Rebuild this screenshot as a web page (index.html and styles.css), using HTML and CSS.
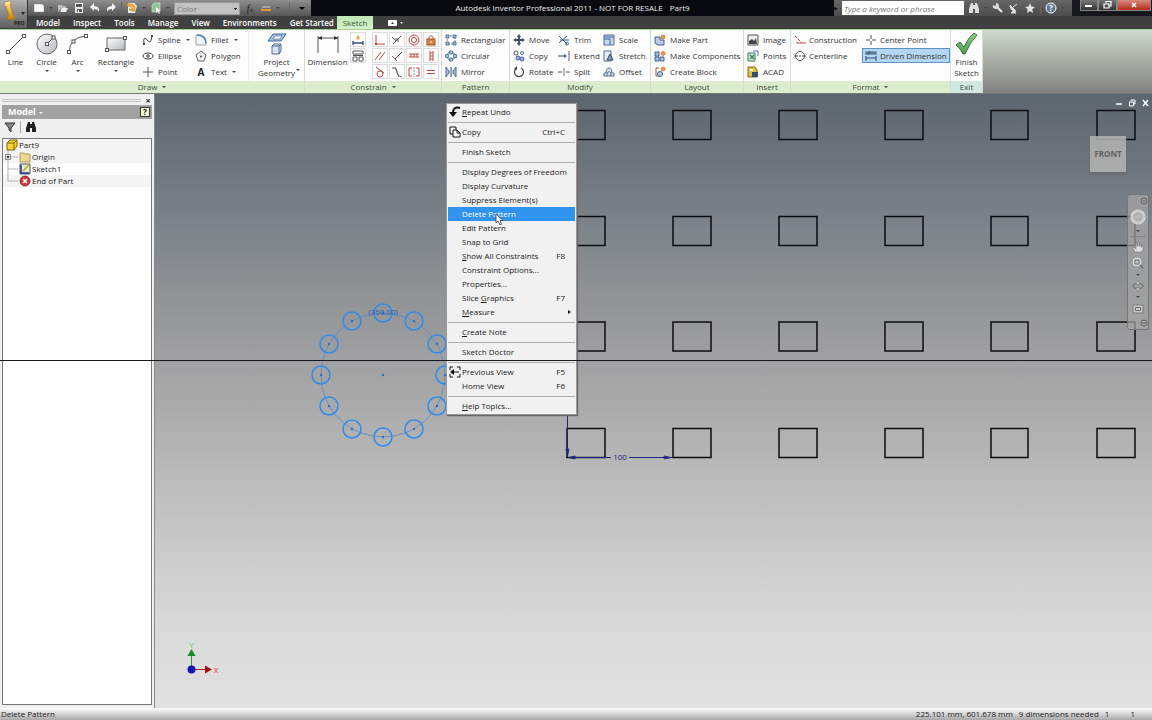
FILE: index.html
```html
<!DOCTYPE html>
<html lang="en">
<head>
<meta charset="utf-8">
<title>Autodesk Inventor Professional 2011 - Part9</title>
<link rel="stylesheet" href="styles.css">
</head>
<body>
<svg class="defs" aria-hidden="true">
  <defs>
    <linearGradient id="steel" x1="0" y1="0" x2="1" y2="1"><stop offset="0" stop-color="#fff"/><stop offset="1" stop-color="#b4b9c0"/></linearGradient>
    <linearGradient id="gold" x1="0" y1="0" x2="0" y2="1"><stop offset="0" stop-color="#fff3b0"/><stop offset=".5" stop-color="#f0b429"/><stop offset="1" stop-color="#c47b08"/></linearGradient>
    <linearGradient id="leaf" x1="0" y1="0" x2="0" y2="1"><stop offset="0" stop-color="#8ed086"/><stop offset="1" stop-color="#4c9b50"/></linearGradient>
    <symbol id="binoculars" viewBox="0 0 12 12"><path d="M3 1h2v2h2V1h2l2 6v4H7V7H5v4H1V7z" fill="currentColor"/></symbol>
  </defs>
</svg>
<div class="app">
  <header class="top">
    <button class="logo" aria-label="Application menu">
      <svg width="28" height="28" viewBox="0 0 28 28"><path d="M5 2l5-1 1 2-1 1 3 11 2 1-1 3-6 1-1-3 2-1L6 6 4 6z" fill="url(#gold)" stroke="#a56b0a" stroke-width=".5"/><path d="M21 12h4l-2 3z" fill="#222"/><text x="14" y="25" class="pro">PRO</text></svg>
    </button>
    <div class="titlebar">
      <div class="qat">
        <button aria-label="New"><svg width="12" height="12" viewBox="0 0 12 12"><path d="M1 2h8l2 2v6H1z" fill="#fff" stroke="#888" stroke-width=".5"/></svg></button><i class="dn"></i>
        <button aria-label="Open"><svg width="12" height="12" viewBox="0 0 12 12"><path d="M1 10V3h4l1 1h3v2H5z" fill="#bbb"/><path d="M3 10l2-4h6l-2 4z" fill="#eee"/></svg></button>
        <button aria-label="Save"><svg width="12" height="12" viewBox="0 0 12 12"><path d="M2 1h8v10H2z" fill="#eee"/><path d="M3 2h6v3H3zM4 7h5v3H4z" fill="#555"/><path d="M5 8h1v2H5z" fill="#fff"/></svg></button>
        <button aria-label="Undo"><svg width="12" height="12" viewBox="0 0 12 12"><path d="M1 5l4-4v3q6 0 5 6-1-3-5-3v2z" fill="#f2f2f2"/></svg></button>
        <button aria-label="Redo"><svg width="12" height="12" viewBox="0 0 12 12"><path d="M11 5L7 1v3q-6 0-5 6 1-3 5-3v2z" fill="#f2f2f2"/></svg></button>
        <i class="bar"></i>
        <button aria-label="Return"><svg width="12" height="12" viewBox="0 0 12 12"><path d="M2 1h6l3 3-2 7H2z" fill="#eee"/><path d="M1 2q8-1 8 4v3H5L3 7h4Q6 4 1 4z" fill="#f3b03c" stroke="#a86d10" stroke-width=".5"/></svg></button><i class="dn"></i>
        <button aria-label="Select"><svg width="12" height="12" viewBox="0 0 12 12"><path d="M2 3l2-2h6v7l-2 2H2z" fill="#8bc58d" stroke="#d9e8d9" stroke-width=".6"/><path d="M6 5l5 4-2 .3 1 2-1 .5-1-2-2 1z" fill="#fff"/></svg></button><i class="dn"></i>
        <select class="color" aria-label="Color"><option>Color</option></select>
        <button class="fx" aria-label="Parameters"><em>f</em><small>x</small></button>
        <button aria-label="Material"><svg width="12" height="12" viewBox="0 0 12 12"><path d="M1 8h10" stroke="#e39a2b" stroke-width="2"/><path d="M2 5h8" stroke="#ddd"/></svg></button><i class="dn"></i>
        <i class="bar end"></i><i class="dn dark"></i>
      </div>
      <h1 class="title"><span>Autodesk Inventor Professional 2011 - NOT FOR RESALE</span><span>Part9</span></h1>
      <div class="search">
        <span class="chev">▶</span>
        <input type="text" aria-label="Search help" placeholder="Type a keyword or phrase">
        <button aria-label="Search"><svg width="12" height="12"><use href="#binoculars"/></svg></button><i class="dn"></i>
        <button aria-label="Subscription"><svg width="12" height="12" viewBox="0 0 12 12"><path d="M4 4l6 6" stroke="#ddd" stroke-width="2.4"/><path d="M1 3a3 3 0 1 0 3-2v2L3 4z" fill="#ddd"/></svg></button>
        <button aria-label="Communication"><svg width="12" height="12" viewBox="0 0 12 12"><path d="M2 3q0 6 6 6zM5 5l4-3M3 11h5L6 8z" fill="#ddd" stroke="#ddd"/></svg></button>
        <button aria-label="Favorites"><svg width="12" height="12" viewBox="0 0 12 12"><path d="M6 1l1.4 3.4L11 5 8.300 7.200 9 11 6 9l-3 2 .7-3.800L1 5l3.600-.6z" fill="#e4e4e4"/></svg></button>
        <i class="bar"></i>
        <button aria-label="Help"><svg width="12" height="12" viewBox="0 0 12 12"><circle cx="6" cy="6" r="5" fill="#5c7891" stroke="#fff"/><text x="6" y="9" class="q">?</text></svg></button><i class="dn"></i>
      </div>
      <div class="winbtns"><button aria-label="Minimize"><svg width="12" height="10" viewBox="0 0 12 10"><path d="M2 6h7" stroke="#fff" stroke-width="2"/></svg></button><button aria-label="Restore"><svg width="12" height="10" viewBox="0 0 12 10"><path d="M3 4h5v4H3zM5 3V1.500h5V6H8" fill="none" stroke="#fff" stroke-width="1.200"/></svg></button><button class="close" aria-label="Close"><svg width="12" height="10" viewBox="0 0 12 10"><path d="M4 3l4 4M8 3L4 7" stroke="#fff" stroke-width="1.600"/></svg></button></div>
    </div>
    <nav class="tabs">
      <a href="#">Model</a><a href="#">Inspect</a><a href="#">Tools</a><a href="#">Manage</a><a href="#">View</a><a href="#">Environments</a><a href="#">Get Started</a><a href="#" class="on">Sketch</a>
      <button aria-label="Ribbon display"><svg width="16" height="8" viewBox="0 0 16 8"><rect x="0" y="1" width="9" height="6" rx="1" fill="#fff"/><path d="M3 5h3L4.500 3z" fill="#333"/><path d="M12 3h3l-1.500 2z" fill="#ddd"/></svg></button>
    </nav>
  </header>

  <section class="ribbon">
    <div class="panel draw">
      <div class="body">
        <button class="big w30"><svg width="24" height="24" viewBox="0 0 24 24"><path d="M4 20L20 4" stroke="#555"/><g fill="#fff" stroke="#555"><rect x="2.500" y="18.500" width="3" height="3"/><rect x="18.500" y="2.500" width="3" height="3"/></g></svg>Line</button>
        <button class="big w30"><svg width="24" height="24" viewBox="0 0 24 24"><circle cx="12" cy="12" r="10" fill="url(#steel)" stroke="#666"/><path d="M12 12l6-6" stroke="#555"/><g fill="#fff" stroke="#555"><rect x="10.500" y="10.500" width="3" height="3"/><rect x="17" y="4" width="3" height="3"/></g></svg>Circle<i class="dn"></i></button>
        <button class="big w30"><svg width="24" height="24" viewBox="0 0 24 24"><path d="M3 20Q4 5 20 4" fill="none" stroke="#555"/><g fill="#fff" stroke="#555"><rect x="1.500" y="18.500" width="3" height="3"/><rect x="6" y="8" width="3" height="3"/><rect x="18.500" y="2.500" width="3" height="3"/></g></svg>Arc<i class="dn"></i></button>
        <button class="big w48"><svg width="24" height="24" viewBox="0 0 24 24"><rect x="3" y="6" width="18" height="12" fill="url(#steel)" stroke="#666"/><g fill="#fff" stroke="#555"><rect x="1.500" y="16.500" width="3" height="3"/><rect x="19.500" y="4.500" width="3" height="3"/></g></svg>Rectangle<i class="dn"></i></button>
        <div class="col c52">
          <button class="t"><svg width="12" height="12" viewBox="0 0 12 12"><path d="M2 10Q1 2 4 5T8 8 10 2" fill="none" stroke="#444"/><rect x="1" y="9" width="2" height="2" fill="#444"/><rect x="9" y="1" width="2" height="2" fill="#444"/></svg>Spline<i class="dn"></i></button>
          <button class="t"><svg width="12" height="12" viewBox="0 0 12 12"><ellipse cx="6" cy="6" rx="5" ry="3" fill="none" stroke="#444"/><path d="M4 6h4M6 4v4" stroke="#444"/></svg>Ellipse</button>
          <button class="t"><svg width="12" height="12" viewBox="0 0 12 12"><path d="M1 6h10M6 1v10" stroke="#555"/></svg>Point</button>
        </div>
        <div class="col c52">
          <button class="t"><svg width="12" height="12" viewBox="0 0 12 12"><path d="M1 11V1h3q7 0 7 7v3z" fill="#f4f6f8" stroke="#777" stroke-width=".7"/><path d="M2 1q8 0 9 8" fill="none" stroke="#4983bd" stroke-width="1.500"/></svg>Fillet<i class="dn"></i></button>
          <button class="t"><svg width="12" height="12" viewBox="0 0 12 12"><path d="M6 1l5 4-2 6H3L1 5z" fill="#f0f0f0" stroke="#666"/><circle cx="6" cy="6.500" r="1" fill="#444"/></svg>Polygon</button>
          <button class="t"><b class="ltr">A</b>Text<i class="dn"></i></button>
        </div>
        <button class="big proj"><svg width="24" height="24" viewBox="0 0 24 24"><path d="M3 9L8 2h13l-5 7z" fill="#a9bfe0" stroke="#3f64a0"/><path d="M8 7l2-3h7l-2 3z" fill="#fff" stroke="#3f64a0" stroke-width=".6"/><path d="M7 14l2-2h7v7l-2 3H7z" fill="#dbe4f2" stroke="#4e6b96"/><path d="M7 14h7v8M14 14l2-2" fill="none" stroke="#4e6b96"/></svg><span>Project<br>Geometry</span><i class="dn side"></i></button>
      </div>
      <h2>Draw<i class="dn"></i></h2>
    </div>
    <div class="panel constrain">
      <div class="body">
        <button class="big w44"><svg width="24" height="24" viewBox="0 0 24 24"><path d="M2 4v17M22 4v17M2 6h20" stroke="#555"/><path d="M2 6l4-2v4zM22 6l-4-2v4z" fill="#333"/></svg>Dimension</button>
        <div class="sq two">
          <button aria-label="Automatic dimensions"><svg width="12" height="12" viewBox="0 0 12 12"><path d="M6 1l2 3-2 2-2-2z" fill="#f0a642"/><path d="M1 7v4M11 7v4M1 9h10" stroke="#304d70" stroke-width="1.300"/></svg></button>
          <button aria-label="Show constraints"><svg width="12" height="12" viewBox="0 0 12 12"><path d="M1 1h10v3H1zM1 7h4v4H1zM7 7h4v4H7zM1 5.500h10" fill="#fff" stroke="#555"/></svg></button>
        </div>
        <div class="sq four">
          <button aria-label="Coincident"><svg width="12" height="12" viewBox="0 0 12 12"><path d="M2 1v9h9" fill="none" stroke="#c04545"/><rect x="1" y="9" width="2" height="2" fill="#c33"/></svg></button>
          <button aria-label="Collinear"><svg width="12" height="12" viewBox="0 0 12 12"><path d="M1 3l4 4M2 10l8-8" stroke="#555"/><path d="M4 5h3v3" fill="none" stroke="#555"/></svg></button>
          <button aria-label="Concentric"><svg width="12" height="12" viewBox="0 0 12 12"><circle cx="6" cy="6" r="5" fill="none" stroke="#c04545"/><circle cx="6" cy="6" r="2.500" fill="none" stroke="#c04545"/></svg></button>
          <button aria-label="Fix"><svg width="12" height="12" viewBox="0 0 12 12"><path d="M4 6V3q2-3 4 0v3" fill="none" stroke="#b76532"/><rect x="2" y="5" width="8" height="6" fill="#d98248" stroke="#a8502a"/><path d="M5 8h2" stroke="#fff"/></svg></button>
          <button aria-label="Parallel"><svg width="12" height="12" viewBox="0 0 12 12"><path d="M1 10l6-8M5 10l6-8" stroke="#b65050"/></svg></button>
          <button aria-label="Perpendicular"><svg width="12" height="12" viewBox="0 0 12 12"><path d="M4 9l7-7" stroke="#555"/><path d="M1 6l5 5" stroke="#a44"/></svg></button>
          <button aria-label="Horizontal"><svg width="12" height="12" viewBox="0 0 12 12"><path d="M1 4h10M1 7h10M3 4v3M6 4v3M9 4v3" stroke="#c04545"/></svg></button>
          <button aria-label="Vertical"><svg width="12" height="12" viewBox="0 0 12 12"><path d="M5 1v10M8 1v10M5 3h3M5 6h3M5 9h3" stroke="#c04545"/></svg></button>
          <button aria-label="Tangent"><svg width="12" height="12" viewBox="0 0 12 12"><circle cx="6" cy="8" r="3" fill="none" stroke="#c04545"/><path d="M2 1l8 6" stroke="#a44"/></svg></button>
          <button aria-label="Smooth"><svg width="12" height="12" viewBox="0 0 12 12"><path d="M1 2q5 0 5 4t5 5M4 1l4 10" fill="none" stroke="#666"/></svg></button>
          <button aria-label="Symmetric"><svg width="12" height="12" viewBox="0 0 12 12"><path d="M4 2H1v8h3M8 2h3v8H8" fill="none" stroke="#c04545"/><path d="M6 1v10" stroke="#888" stroke-dasharray="2 1"/></svg></button>
          <button aria-label="Equal"><svg width="12" height="12" viewBox="0 0 12 12"><path d="M2 4.500h8M2 7.500h8" stroke="#c04545"/></svg></button>
        </div>
      </div>
      <h2>Constrain<i class="dn"></i></h2>
    </div>
    <div class="panel pattern">
      <div class="body"><div class="col">
        <button class="t"><svg width="12" height="12" viewBox="0 0 12 12"><path d="M2 2h8v8H2z" fill="none" stroke="#888" stroke-dasharray="2 1"/><g fill="#9fb9dc" stroke="#3a5f94" stroke-width=".8"><path d="M1 1h3v3H1zM8 1h3v3H8zM1 8h3v3H1zM8 8h3v3H8z"/></g></svg>Rectangular</button>
        <button class="t"><svg width="12" height="12" viewBox="0 0 12 12"><circle cx="6" cy="6" r="4" fill="none" stroke="#888"/><g fill="#9fc4e0" stroke="#3a6f94" stroke-width=".8"><path d="M4.500 1h3v3h-3zM4.500 8h3v3h-3zM.500 4.500h3v3h-3zM8.500 4.500h3v3h-3z"/></g></svg>Circular</button>
        <button class="t"><svg width="12" height="12" viewBox="0 0 12 12"><path d="M1 1v10l3-4V5zM11 1v10L8 7V5z" fill="#a9bfe0" stroke="#3a5f94" stroke-width=".9"/><path d="M6 1v10" stroke="#444"/></svg>Mirror</button>
      </div></div>
      <h2>Pattern</h2>
    </div>
    <div class="panel modify">
      <div class="body">
        <div class="col c46">
          <button class="t"><svg width="12" height="12" viewBox="0 0 12 12"><path d="M6 0l2 3H7v2h2V4l3 2-3 2V7H7v2h1l-2 3-2-3h1V7H3v1L0 6l3-2v1h2V3H4z" fill="#445468"/></svg>Move</button>
          <button class="t"><svg width="12" height="12" viewBox="0 0 12 12"><circle cx="3" cy="3" r="2" fill="#fff" stroke="#555"/><circle cx="9" cy="3" r="1.500" fill="#fff" stroke="#3f70b0"/><circle cx="5" cy="8" r="2" fill="#9cb8e2" stroke="#3f60a0"/><circle cx="9" cy="9" r="2" fill="#9cb8e2" stroke="#3f60a0"/></svg>Copy</button>
          <button class="t"><svg width="12" height="12" viewBox="0 0 12 12"><path d="M4 2a4.500 4.500 0 1 0 4 0" fill="none" stroke="#444" stroke-width="1.300"/><path d="M4 0v4L1 3z" fill="#444"/></svg>Rotate</button>
        </div>
        <div class="col c46">
          <button class="t"><svg width="12" height="12" viewBox="0 0 12 12"><path d="M1 2l8 8M1 9l8-7M2 6h9" stroke="#3d5f7a"/><circle cx="9" cy="9.500" r="1.500" fill="none" stroke="#3d8098"/></svg>Trim</button>
          <button class="t"><svg width="12" height="12" viewBox="0 0 12 12"><path d="M0 6h7" stroke="#444"/><path d="M6 4l3 2-3 2z" fill="#2f6db0"/><path d="M11 1v10" stroke="#666"/></svg>Extend</button>
          <button class="t"><svg width="12" height="12" viewBox="0 0 12 12"><path d="M0 6h4M8 6h4" stroke="#555"/><path d="M6 2v8" stroke="#777"/></svg>Split</button>
        </div>
        <div class="col">
          <button class="t"><svg width="12" height="12" viewBox="0 0 12 12"><path d="M1 1h10v10H1z" fill="#c9daf0" stroke="#4f6d94"/><path d="M1 5h6v6M1 3h10" fill="none" stroke="#35679c"/></svg>Scale</button>
          <button class="t"><svg width="12" height="12" viewBox="0 0 12 12"><path d="M1 1h7v10H1z" fill="#e8eef7" stroke="#4f6d94"/><path d="M4 10l3-6 3 6z" fill="#7fa3d4" stroke="#345"/></svg>Stretch</button>
          <button class="t"><svg width="12" height="12" viewBox="0 0 12 12"><path d="M1 10V7h2q0-5 3-5t3 5h2v3z" fill="#d5e0ee" stroke="#56708f"/><path d="M4 10V7q2-3 4 0v3" fill="none" stroke="#56708f"/></svg>Offset</button>
        </div>
      </div>
      <h2>Modify</h2>
    </div>
    <div class="panel layout">
      <div class="body"><div class="col">
        <button class="t"><svg width="12" height="12" viewBox="0 0 12 12"><path d="M1 3h5v3h4v5H4L1 9z" fill="#b9cce6" stroke="#3e618f"/><circle cx="9" cy="3" r="2" fill="#f09a3a" stroke="#b5651d" stroke-width=".6"/></svg>Make Part</button>
        <button class="t"><svg width="12" height="12" viewBox="0 0 12 12"><path d="M1 2h4v4H1zM1 7h4v4H1zM6 7h4v4H6z" fill="#a9c3e6" stroke="#3e618f"/><circle cx="9" cy="3.500" r="2" fill="#f09a3a" stroke="#b5651d" stroke-width=".6"/></svg>Make Components</button>
        <button class="t"><svg width="12" height="12" viewBox="0 0 12 12"><path d="M5 2H2v8h3" fill="none" stroke="#b65050"/><circle cx="6" cy="8" r="2.500" fill="#b9cce6" stroke="#3e618f"/><circle cx="9" cy="3" r="2" fill="#f09a3a" stroke="#b5651d" stroke-width=".6"/></svg>Create Block</button>
      </div></div>
      <h2>Layout</h2>
    </div>
    <div class="panel insert">
      <div class="body"><div class="col">
        <button class="t"><svg width="12" height="12" viewBox="0 0 12 12"><path d="M1 1h10v10H1z" fill="#eee" stroke="#555"/><path d="M2 10V7l3-2 2 2 2-3 1 6z" fill="#444"/></svg>Image</button>
        <button class="t"><svg width="12" height="12" viewBox="0 0 12 12"><path d="M1 3h7v8H1z" fill="#d7eadc" stroke="#2f7d5a"/><path d="M3 5l4 4M7 5L3 9" stroke="#2f7d5a" stroke-width="1.300"/><path d="M6 1h5v5" fill="none" stroke="#4a78a8"/></svg>Points</button>
        <button class="t"><svg width="12" height="12" viewBox="0 0 12 12"><path d="M1 1h7l2 3v7H1z" fill="#e8bd3c" stroke="#8b6b13"/><path d="M5 6h6v5H5z" fill="#2f4e78"/><path d="M3 3h3v2H3z" fill="#fff"/></svg>ACAD</button>
      </div></div>
      <h2>Insert</h2>
    </div>
    <div class="panel format">
      <div class="body">
        <div class="col c70">
          <button class="t"><svg width="12" height="12" viewBox="0 0 12 12"><path d="M1 2l7 7" stroke="#c44" stroke-dasharray="3 1"/><path d="M2 9h10" stroke="#b55"/></svg>Construction</button>
          <button class="t"><svg width="12" height="12" viewBox="0 0 12 12"><circle cx="6" cy="6" r="4.500" fill="none" stroke="#555"/><path d="M0 6h4M5 6h2M8 6h4" stroke="#555"/></svg>Centerline</button>
        </div>
        <div class="col last">
          <button class="t"><svg width="12" height="12" viewBox="0 0 12 12"><path d="M1 6h4M7 6h4M6 1v4M6 7v4" stroke="#555"/></svg>Center Point</button>
          <button class="t active"><svg width="12" height="12" viewBox="0 0 12 12"><path d="M1 1v4M3 1v4l2-4v4M7 1v4M9 1v4M11 1v4M1 3h10" fill="none" stroke="#345" stroke-width=".8"/><path d="M1 6v5M11 6v5M1 8h10" stroke="#2d4d70"/></svg>Driven Dimension</button>
        </div>
      </div>
      <h2>Format<i class="dn"></i></h2>
    </div>
    <div class="panel exit">
      <div class="body"><button class="big w30"><svg width="24" height="24" viewBox="0 0 24 24"><path d="M1 13l4-3 4 5Q13 6 19 1l3 2Q15 10 10 22H8Q6 17 1 13z" fill="url(#leaf)" stroke="#3a6b3c"/></svg><span>Finish<br>Sketch</span></button></div>
      <h2>Exit</h2>
    </div>
  </section>

  <main class="work">
    <aside class="browser">
      <div class="grip"><span></span><button aria-label="Close browser">×</button></div>
      <div class="head"><strong>Model<i class="dn"></i></strong><button aria-label="Browser help">?</button></div>
      <div class="tools"><button aria-label="Filter"><svg width="12" height="12" viewBox="0 0 12 12"><path d="M1 2h10L7 7v4L5 9V7z" fill="#888" stroke="#333"/></svg></button><i></i><button aria-label="Find"><svg width="12" height="12"><use href="#binoculars"/></svg></button></div>
      <ul class="tree">
        <li><svg width="12" height="12" viewBox="0 0 12 12"><path d="M1 4l3-3h7v6l-3 4H1z" fill="#f6d434" stroke="#7d6500"/><path d="M1 4h7v7M8 4l3-3" fill="none" stroke="#7d6500"/></svg>Part9</li>
        <li class="sub"><svg width="14" height="12" viewBox="0 0 14 12"><path d="M4 0v12M6 6h8" stroke="#999" stroke-width=".7"/><rect x="1.500" y="3.500" width="5" height="5" fill="#fff" stroke="#777" stroke-width=".8"/><path d="M2.500 6h3M4 4.500v3" stroke="#111"/></svg><svg width="12" height="12" viewBox="0 0 12 12"><path d="M1 2h4l1 1h5v8H1z" fill="#ecd691" stroke="#a58a45" stroke-width=".8"/></svg>Origin</li>
        <li class="sub plain"><svg width="14" height="12" viewBox="0 0 14 12"><path d="M4 0v12M4 6h10" stroke="#999" stroke-width=".7"/></svg><svg width="12" height="12" viewBox="0 0 12 12"><path d="M1 1h10v10H1z" fill="#e7ecd8" stroke="#455"/><path d="M2 2v8h8" fill="none" stroke="#22309a" stroke-width="1.500"/><path d="M4 8l6-6" stroke="#c9b72d" stroke-width="2"/></svg>Sketch1</li>
        <li class="sub"><svg width="14" height="12" viewBox="0 0 14 12"><path d="M4 0v6h10" fill="none" stroke="#999" stroke-width=".7"/></svg><svg width="12" height="12" viewBox="0 0 12 12"><circle cx="6" cy="6" r="5" fill="#d23b3b" stroke="#7f1d1d" stroke-width=".8"/><path d="M4 4l4 4M8 4L4 8" stroke="#fff" stroke-width="1.500"/></svg>End of Part</li>
      </ul>
    </aside>

    <div class="canvas">
      <svg class="sketch" viewBox="155 94 997 614" preserveAspectRatio="xMinYMin meet" role="img" aria-label="Sketch with circular and rectangular patterns">
        <defs>
          <g id="row" fill="none" stroke="#0c0d10" stroke-width="1.500"><path d="M567 0h38v29h-38zM673 0h38v29h-38zM779 0h38v29h-38zM885 0h38v29h-38zM991 0h37v29h-37zM1097 0h38v29h-38z"/></g>
          <g id="hole"><circle r="9" fill="none" stroke="#2f8cec" stroke-width="1.500"/><circle r="1.200" fill="#2f6fc0"/></g>
        </defs>
        <use href="#row" y="110.500"/><use href="#row" y="216.500"/><use href="#row" y="322"/><use href="#row" y="428.500"/>
        <circle cx="383" cy="375" r="62" fill="none" stroke="#5f8fc4" stroke-width=".9"/>
        <use href="#hole" x="383" y="313"/><use href="#hole" x="414" y="321"/><use href="#hole" x="437" y="344"/><use href="#hole" x="445" y="375"/><use href="#hole" x="437" y="406"/><use href="#hole" x="414" y="429"/><use href="#hole" x="383" y="437"/><use href="#hole" x="352" y="429"/><use href="#hole" x="329" y="406"/><use href="#hole" x="321" y="375"/><use href="#hole" x="329" y="344"/><use href="#hole" x="352" y="321"/>
        <circle cx="383" cy="375" r="1.200" fill="#2f6fc0"/>
        <text x="383" y="315" class="ang">(360.00)</text>
        <g stroke="#23237a" fill="none"><path d="M567.500 380v76M568 457.500h43M629 457.500h43"/><path d="M566 449h3l-1.500 7zM575 456v3l-6-1.500zM664 456v3l7-1.500z"/></g>
        <text x="620" y="460" class="dim">100</text>
        <path d="M191.500 669v-14" stroke="#2b9a3c"/><path d="M191.500 649l4 7h-8z" fill="#168a2a"/><path d="M192 669.500h14" stroke="#a22"/><path d="M212 669.500l-7-4v8z" fill="#9c1111"/><circle cx="191.500" cy="669.500" r="4" fill="#1414b8"/>
        <text x="191.500" y="648" class="ax g">Y</text><text x="216" y="673" class="ax r">X</text>
      </svg>
      <div class="mdi"><button aria-label="Minimize document"><svg width="10" height="10" viewBox="0 0 10 10"><path d="M2 6h6" stroke="#fff" stroke-width="1.500"/></svg></button><button aria-label="Restore document"><svg width="10" height="10" viewBox="0 0 10 10"><path d="M2.500 4h4v4h-4zM4 3.500V2h4v4H7" fill="none" stroke="#fff"/></svg></button><button aria-label="Close document"><svg width="10" height="10" viewBox="0 0 10 10"><path d="M3 2l5 6M8 2L3 8" stroke="#fff" stroke-width="1.400"/></svg></button></div>
      <button class="cube">FRONT</button>
      <div class="nav">
        <button class="s" aria-label="Close navigation bar"><svg width="8" height="8" viewBox="0 0 8 8"><circle cx="4" cy="4" r="3" fill="none" stroke="#666"/><path d="M3 3l2 2M5 3L3 5" stroke="#666" stroke-width=".7"/></svg></button>
        <button aria-label="Steering wheel"><svg width="16" height="16" viewBox="0 0 16 16"><circle cx="8" cy="8" r="7" fill="#c8c8c8" stroke="#e4e4e4"/><circle cx="8" cy="8" r="3.500" fill="#bbb" stroke="#999"/><path d="M8 1v4M8 11v4M1 8h4M11 8h4" stroke="#bbb"/></svg></button><i class="dn"></i><hr>
        <button aria-label="Pan"><svg width="12" height="12" viewBox="0 0 12 12"><path d="M3 11L1 7l1-1 2 2V2h1v3h1V1h1v4h1V2h1v4h1V4h1v5l-2 2z" fill="#ddd" stroke="#777" stroke-width=".6"/></svg></button>
        <button aria-label="Zoom"><svg width="12" height="12" viewBox="0 0 12 12"><circle cx="5" cy="5" r="4" fill="#c2c2c2" stroke="#ddd"/><path d="M3 3h4v4H3z" fill="none" stroke="#777"/><path d="M8 8l3 3" stroke="#666" stroke-width="1.500"/></svg></button><i class="dn"></i>
        <button aria-label="Orbit"><svg width="12" height="12" viewBox="0 0 12 12"><ellipse cx="6" cy="6" rx="5" ry="2.500" fill="none" stroke="#666"/><path d="M6 1l2 3H4zM6 11l2-3H4z" fill="#ddd" stroke="#777" stroke-width=".6"/></svg></button><i class="dn"></i>
        <button aria-label="Look at"><svg width="12" height="12" viewBox="0 0 12 12"><path d="M1 2h10v8H1z" fill="#ccc" stroke="#777"/><path d="M3.500 4.500h5v3h-5z" fill="none" stroke="#666"/></svg></button>
        <button class="s" aria-label="Navigation options"><svg width="8" height="8" viewBox="0 0 8 8"><circle cx="4" cy="4" r="3" fill="none" stroke="#666"/><path d="M2.500 3.500h3L4 5.500z" fill="#666"/></svg></button>
      </div>

      <div class="menu" role="menu">
        <button role="menuitem"><svg width="12" height="12" viewBox="0 0 12 12"><path d="M11 2Q4 0 4 7" fill="none" stroke="#111" stroke-width="2"/><path d="M0 6h8l-4 5z" fill="#111"/></svg><span><u>R</u>epeat Undo</span></button><hr>
        <button role="menuitem"><svg width="12" height="12" viewBox="0 0 12 12"><path d="M1 1h6v7H1z" fill="#fff" stroke="#111"/><path d="M4 4h4l3 3v4H4z" fill="#fff" stroke="#111"/><path d="M8 4v3h3" fill="none" stroke="#111"/></svg><span>Copy</span><kbd>Ctrl+C</kbd></button><hr>
        <button role="menuitem"><span>Finish Sketch</span></button><hr>
        <button role="menuitem"><span>Display Degrees of Freedom</span></button>
        <button role="menuitem"><span>Display Curvature</span></button>
        <button role="menuitem"><span>Suppress Element(s)</span></button>
        <button role="menuitem" class="hot"><span>Delete Pattern</span></button>
        <button role="menuitem"><span>Edit Pattern</span></button>
        <button role="menuitem"><span>Snap to Grid</span></button>
        <button role="menuitem"><span><u>S</u>how All Constraints</span><kbd>F8</kbd></button>
        <button role="menuitem"><span>Constraint Options...</span></button>
        <button role="menuitem"><span>Properties...</span></button>
        <button role="menuitem"><span>Slice <u>G</u>raphics</span><kbd>F7</kbd></button>
        <button role="menuitem"><span><u>M</u>easure</span><i class="sub-arrow"></i></button><hr>
        <button role="menuitem"><span><u>C</u>reate Note</span></button><hr>
        <button role="menuitem"><span>Sketch Doctor</span></button><hr>
        <button role="menuitem"><svg width="12" height="12" viewBox="0 0 12 12"><path d="M1 4V1h3M8 1h3v3M11 8v3H8M4 11H1V8M3 6h7" fill="none" stroke="#111"/><path d="M1 6l4-3v6z" fill="#111"/></svg><span>Previous View</span><kbd>F5</kbd></button>
        <button role="menuitem"><span>Home View</span><kbd>F6</kbd></button><hr>
        <button role="menuitem"><span><u>H</u>elp Topics...</span></button>
      </div>
    </div>
  </main>

  <footer class="status"><span class="msg">Delete Pattern</span><span>225.101 mm, 601.678 mm</span><span>9 dimensions needed</span><span class="n">1</span><span class="n">1</span></footer>
  <div class="crosshair"></div>
  <svg class="cursor" width="9" height="13" viewBox="0 0 9 13"><path d="M1 1v9l2-2 2 4 1.500-.7L5 7.500h3z" fill="#fff" stroke="#333" stroke-width=".8"/></svg>
</div>
</body>
</html>
```

FILE: styles.css
```css
* { box-sizing: border-box; }
body { margin: 0; font: 8px/12px "Open Sans", "Noto Sans", sans-serif; color: #333; overflow: hidden; }
button { font: inherit; color: inherit; background: none; border: 0; padding: 0; margin: 0; }
h1, h2 { margin: 0; font: inherit; }
svg { display: block; flex: none; }
.defs { position: absolute; width: 0; height: 0; }
.app { position: relative; display: flex; flex-direction: column; height: 100vh; }
.dn { display: inline-block; flex: none; width: 0; height: 0; border: 2px solid transparent; border-top-color: #444; border-bottom: 0; }

/* title bar and tabs */
.top { display: grid; grid-template-columns: 28px 1fr; grid-template-rows: 16px 13px; background: #404040; }
.logo { grid-row: 1 / 3; height: 28px; background: linear-gradient(#b0b0b0, #5e5e5e); border-right: 1px solid #333; }
.pro { font: bold 5px "Open Sans", sans-serif; fill: #26180a; }
.titlebar { display: flex; background: #080a0f; }
.qat { display: flex; align-items: center; width: 283px; flex: none; padding-left: 5px; gap: 4px; background: linear-gradient(#8e8e8e, #555); }
.qat button { width: 12px; flex: none; }
.qat .bar, .search .bar { width: 1px; height: 12px; background: #666; }
.qat .bar.end { margin-left: 5px; margin-right: 5px; }
.dn.dark { border-top-color: #000; border-width: 3px; border-bottom: 0; }
.color { width: 66px; height: 13px; flex: none; padding: 0 0 0 2px; font: inherit; color: #777; border: 1px solid #999; border-radius: 0; appearance: none; background: #c2c2c2 conic-gradient(from -45deg at 50% 100%, #333 90deg, transparent 0) 58px 5px / 4px 2px no-repeat; }
.fx { font: 10px "Liberation Serif", serif; white-space: nowrap; color: #222; }
.fx small { font-size: 7px; }
.title { flex: 1; display: flex; gap: 7px; justify-content: center; color: #eee; line-height: 16px; white-space: nowrap; }
.search { display: flex; align-items: center; gap: 4px; width: 238px; flex: none; color: #ddd; background: linear-gradient(#666, #4c4c4c); }
.search .chev { width: 4px; font-size: 5px; color: #111; }
.search input { width: 122px; height: 14px; border: 0; padding: 1px 2px; font: italic 8px/12px "Open Sans", sans-serif; background: #fff; }
.search input::placeholder { color: #777; }
.q { font: bold 8px "Open Sans", sans-serif; fill: #fff; text-anchor: middle; }
.winbtns { display: flex; width: 80px; flex: none; padding: 0 1px 0 8px; background: #15171b; }
.winbtns button { flex: 1; height: 11px; background: linear-gradient(#777, #333); border: 1px solid #888; border-top: 0; display: flex; justify-content: center; }
.winbtns .close { flex: 2; background: linear-gradient(#d98a7c, #b52a1c); }
.tabs { display: flex; align-items: stretch; color: #fff; font-weight: 600; line-height: 13px; }
.tabs a { color: inherit; text-decoration: none; padding: 0 7px 0 6px; }
.tabs a:first-child { padding-left: 8px; }
.tabs .on { background: linear-gradient(#bfe6b4, #d4f0c9); color: #35572f; font-weight: 400; margin-left: -4px; padding-right: 6px; }
.tabs button { margin-left: 15px; }

/* ribbon */
.ribbon { display: flex; height: 65px; flex: none; border-top: 1px solid #a7cf95; border-bottom: 1px solid #73777b; background: linear-gradient(#d0d9cb, #808080); }
.panel { display: flex; flex-direction: column; flex: none; background: #fdfdfd; border-right: 1px solid #d5ddd2; white-space: nowrap; }
.panel .body { display: flex; flex: 1; }
.panel h2 { height: 12px; text-align: center; background: #dbedcd; color: #3c4a3a; }
.panel h2 .dn { margin: 0 0 2px 5px; }
.draw { width: 305px; }
.constrain { width: 137px; }
.pattern { width: 68px; }
.modify { width: 141px; }
.layout { width: 93px; }
.insert { width: 47px; }
.format { width: 160px; }
.exit { width: 32px; }
.exit h2 { background: #d1e8e2; }
.big { position: relative; display: flex; flex-direction: column; align-items: center; padding-top: 2px; line-height: 11px; }
.big .dn { margin-top: 3px; }
.big .side { position: absolute; right: 4px; bottom: 10px; }
.w30 { width: 31px; }
.w48 { width: 46px; }
.w44 { width: 45px; }
.proj { width: 56px; margin-left: auto; border-left: 1px solid #ececec; }
.col { display: grid; grid-template-rows: repeat(3, 16px); align-content: start; padding: 2px 0 0 3px; }
.c52 { width: 53px; }
.c46 { width: 45px; }
.c70 { width: 71px; }
.t { display: flex; align-items: center; gap: 4px; text-align: left; height: 15px; }
.t .dn { margin-left: 1px; }
.format .c70 { padding-left: 0; }
.format .last { padding-left: 0; }
.format .t { padding: 0 3px; gap: 3px; }
.format .active { background: #b4d6f4; outline: 1px solid #5d92c4; outline-offset: -1px; }
.ltr { width: 12px; font-size: 10px; text-align: center; color: #222; }
.sq { display: grid; gap: 1px; align-content: start; padding-top: 2px; }
.sq button { width: 16px; height: 15px; display: grid; place-items: center; border: 1px solid #dcdcdc; }
.two { margin-right: 6px; }
.four { grid-template-columns: repeat(4, 16px); }

/* model browser */
.work { display: flex; flex: 1; min-height: 0; }
.browser { width: 155px; flex: none; display: flex; flex-direction: column; padding: 2px 2px 3px 2px; background: #f0f0f0; border-right: 1px solid #888; color: #222; }
.grip { display: flex; align-items: center; gap: 3px; height: 9px; }
.grip span { flex: 1; height: 3px; border: 1px solid #c4c4c4; border-width: 1px 0; }
.grip button { width: 8px; font: bold 9px/8px "Open Sans", sans-serif; }
.head { display: flex; justify-content: space-between; align-items: center; height: 14px; padding: 0 2px 0 6px; background: #a2a2a2; color: #fff; font-size: 9px; }
.head .dn { border-top-color: #fff; margin: 0 0 1px 3px; }
.head button { width: 10px; height: 10px; border: 1px solid #333; background: #f5f5dc; color: #111; font: bold 8px/8px "Open Sans", sans-serif; }
.tools { display: flex; align-items: center; gap: 4px; height: 19px; padding: 0 0 3px 2px; }
.tools i { width: 1px; height: 12px; background: #aaa; }
.tree { flex: 1; margin: 0; padding: 0; list-style: none; background: #fff; border: 1px solid #777; }
.tree li { display: flex; align-items: center; height: 12px; gap: 1px; background: #f4f4f4; padding-left: 3px; }
.tree .sub { padding-left: 1px; }
.tree .plain { background: #fff; }

/* graphics window */
.canvas { position: relative; flex: 1; background: linear-gradient(#5c666f, #7e8489 22%, #949597 35%, #acacad 52%, #bababa 62%, #d9d9d9 86%, #e1e1e1); }
.sketch { width: 100%; }
.ang, .dim, .ax { font: 8px "Open Sans", sans-serif; text-anchor: middle; }
.ang { fill: #2463b5; }
.dim { fill: #23237a; }
.g { fill: #4ccc58; }
.r { fill: #d8283c; }
.mdi { position: absolute; top: 4px; right: 2px; display: flex; gap: 3px; }
.cube { position: absolute; top: 42px; right: 26px; width: 36px; height: 36px; background: rgba(180, 180, 178, .85); color: #62605e; font-weight: 700; font-size: 8px; box-shadow: 0 2px 3px #666; }
.nav { position: absolute; top: 100px; right: 3px; width: 22px; height: 136px; padding: 2px 0; display: flex; flex-direction: column; align-items: center; justify-content: space-between; background: rgba(165, 165, 165, .7); border: 1px solid #777; border-radius: 3px; }
.nav .s { align-self: flex-end; }
.nav hr { width: 16px; margin: 0; border: 0; border-top: 1px solid #888; }

/* context menu */
.menu { position: absolute; top: 9px; left: 291px; width: 131px; padding: 1px; background: #f1f1f1; border: 1px solid #999; box-shadow: 1px 1px 1px #6d6664; color: #1b1b1b; }
.menu button { display: flex; align-items: center; width: 100%; height: 14px; padding: 0 10px 0 14px; line-height: 14px; white-space: nowrap; }
.menu button svg { margin-left: -13px; margin-right: 1px; }
.menu span { flex: 1; text-align: left; }
.menu kbd { font: inherit; }
.menu hr { margin: 3px 0 2px; border: 0; border-top: 1px solid #adadad; }
.menu .hot { background: #3093ee; color: #fff; }
.sub-arrow { border: 2px solid transparent; border-left: 3px solid #111; border-right: 0; margin-right: -6px; }

.status { display: flex; align-items: center; gap: 6px; height: 12px; flex: none; padding: 0 17px 0 1px; background: linear-gradient(#fff, #a8a8a8); color: #222; }
.status .msg { flex: 1; }
.status .n + .n { margin-left: 15px; }
.crosshair { position: absolute; top: 360px; left: 0; right: 0; height: 1px; background: #15151b; }
.cursor { position: absolute; top: 213px; left: 495px; }
```
